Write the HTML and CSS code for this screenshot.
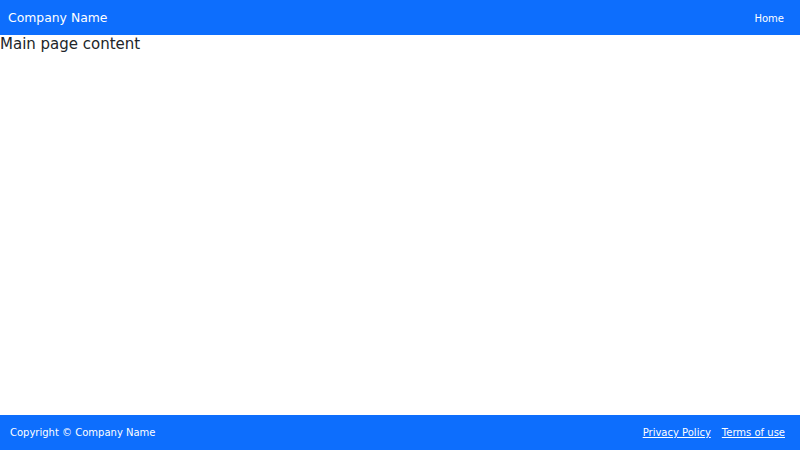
FILE: index.html
```html
<!DOCTYPE html>
<html>
<head>
<meta charset="utf-8">
<link rel="stylesheet" href="styles.css">
</head>
<body>
<div class="page">
  <header class="topbar">
    <span class="brand">Company Name</span>
    <nav class="nav"><a class="nav-link" href="#">Home</a></nav>
  </header>
  <main class="content">Main page content</main>
  <footer class="footer">
    <span class="copy">Copyright © Company Name</span>
    <nav class="footer-links">
      <a href="#">Privacy Policy</a>
      <a href="#">Terms of use</a>
    </nav>
  </footer>
</div>
</body>
</html>
```
FILE: styles.css
```css
html, body { margin: 0; padding: 0; height: 100%; }
body { font-family: "DejaVu Sans", sans-serif; color: #212529; background: #fff; }
.page { display: flex; flex-direction: column; height: 100vh; }
.topbar {
  height: 35px; background: #0d6efd; color: #fff;
  display: flex; align-items: center; justify-content: space-between;
  padding: 0 16px 0 8px; box-sizing: border-box;
}
.brand { font-size: 12.4px; }
.nav { padding-bottom: 3px; }
.nav-link { color: #fff; text-decoration: none; font-size: 10px; }
.content { flex: 1; font-size: 15px; line-height: 18px; }
.footer {
  height: 35px; background: #0d6efd; color: #fff;
  display: flex; align-items: center; justify-content: space-between;
  padding: 0 15px 0 10px; box-sizing: border-box; font-size: 10px;
}
.footer-links { display: flex; gap: 11px; }
.footer-links a { color: #fff; }
```
